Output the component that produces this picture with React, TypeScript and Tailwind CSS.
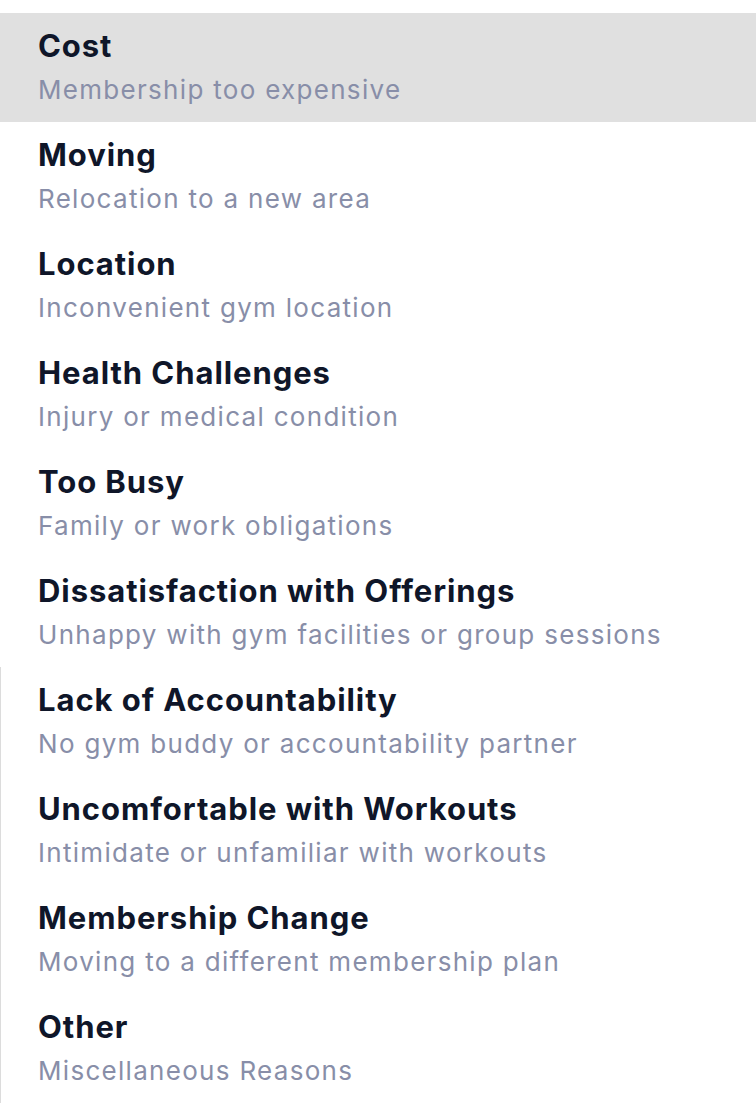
import React from "react";

const items = [
  { t: "Cost", s: "Membership too expensive" },
  { t: "Moving", s: "Relocation to a new area" },
  { t: "Location", s: "Inconvenient gym location" },
  { t: "Health Challenges", s: "Injury or medical condition" },
  { t: "Too Busy", s: "Family or work obligations" },
  { t: "Dissatisfaction with Offerings", s: "Unhappy with gym facilities or group sessions" },
  { t: "Lack of Accountability", s: "No gym buddy or accountability partner" },
  { t: "Uncomfortable with Workouts", s: "Intimidate or unfamiliar with workouts" },
  { t: "Membership Change", s: "Moving to a different membership plan" },
  { t: "Other", s: "Miscellaneous Reasons" },
];

export default function App() {
  return (
    <div
      className="w-[756px] h-[1116px] bg-white pt-[13px] overflow-hidden"
      style={{ fontFamily: "Inter, 'Noto Sans', sans-serif" }}
    >
      {items.map((it, i) => (
        <div
          key={it.t}
          className={
            i === 0
              ? "h-[109px] flex flex-col justify-center pl-[38px] bg-[#e0e0e0]"
              : i >= 6
              ? "h-[109px] flex flex-col justify-center pl-[37px] border-l border-[#dcdcdc]"
              : "h-[109px] flex flex-col justify-center pl-[38px]"
          }
        >
          <div className="text-[31px] leading-[44px] font-bold text-[#0f1629] tracking-[0.03em]">
            {it.t}
          </div>
          <div className="text-[26px] leading-[44px] text-[#888ea8] tracking-[0.05em]">{it.s}</div>
        </div>
      ))}
    </div>
  );
}
